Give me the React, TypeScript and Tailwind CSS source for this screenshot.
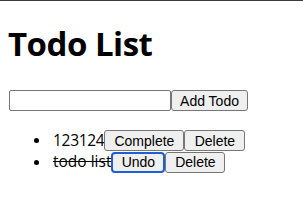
import React from "react";

const base =
  "h-[21px] flex items-center justify-center bg-[#efefef] text-[14px] text-black font-['Liberation_Sans',Arial,sans-serif] leading-none";
const btn = base + " border border-[#767676] rounded-[3px]";
const focusBtn = base + " border-2 border-[#1f5fd1] rounded-[4px]";

export default function App() {
  return (
    <div className="w-[303px] h-[223px] bg-white border-t border-[#3a3a3a] font-['Open_Sans',sans-serif] text-black overflow-hidden">
      <div className="pl-[8px]">
        <h1 className="mt-[21px] text-[33px] font-bold leading-[44px] tracking-[-0.5px]">Todo List</h1>
        <div className="flex mt-[24px] pl-[1px]">
          <div className="w-[162px] h-[21px] border border-[#767676] rounded-[2px] bg-white" />
          <button className={btn + " w-[77px]"}>Add Todo</button>
        </div>
        <ul className="mt-[19px] pl-[26px] text-[15.5px]">
          <li className="flex items-center h-[21px]">
            <span className="w-[5px] h-[5px] rounded-full bg-black mr-[14px]" />
            <span className="tracking-[-0.3px]">123124</span>
            <button className={btn + " w-[80px]"}>Complete</button>
            <button className={btn + " w-[61px]"}>Delete</button>
          </li>
          <li className="flex items-center h-[22px]">
            <span className="w-[5px] h-[5px] rounded-full bg-black mr-[14px]" />
            <span className="line-through">todo list</span>
            <button className={focusBtn + " w-[54px]"}>Undo</button>
            <button className={btn + " w-[60px]"}>Delete</button>
          </li>
        </ul>
      </div>
    </div>
  );
}
